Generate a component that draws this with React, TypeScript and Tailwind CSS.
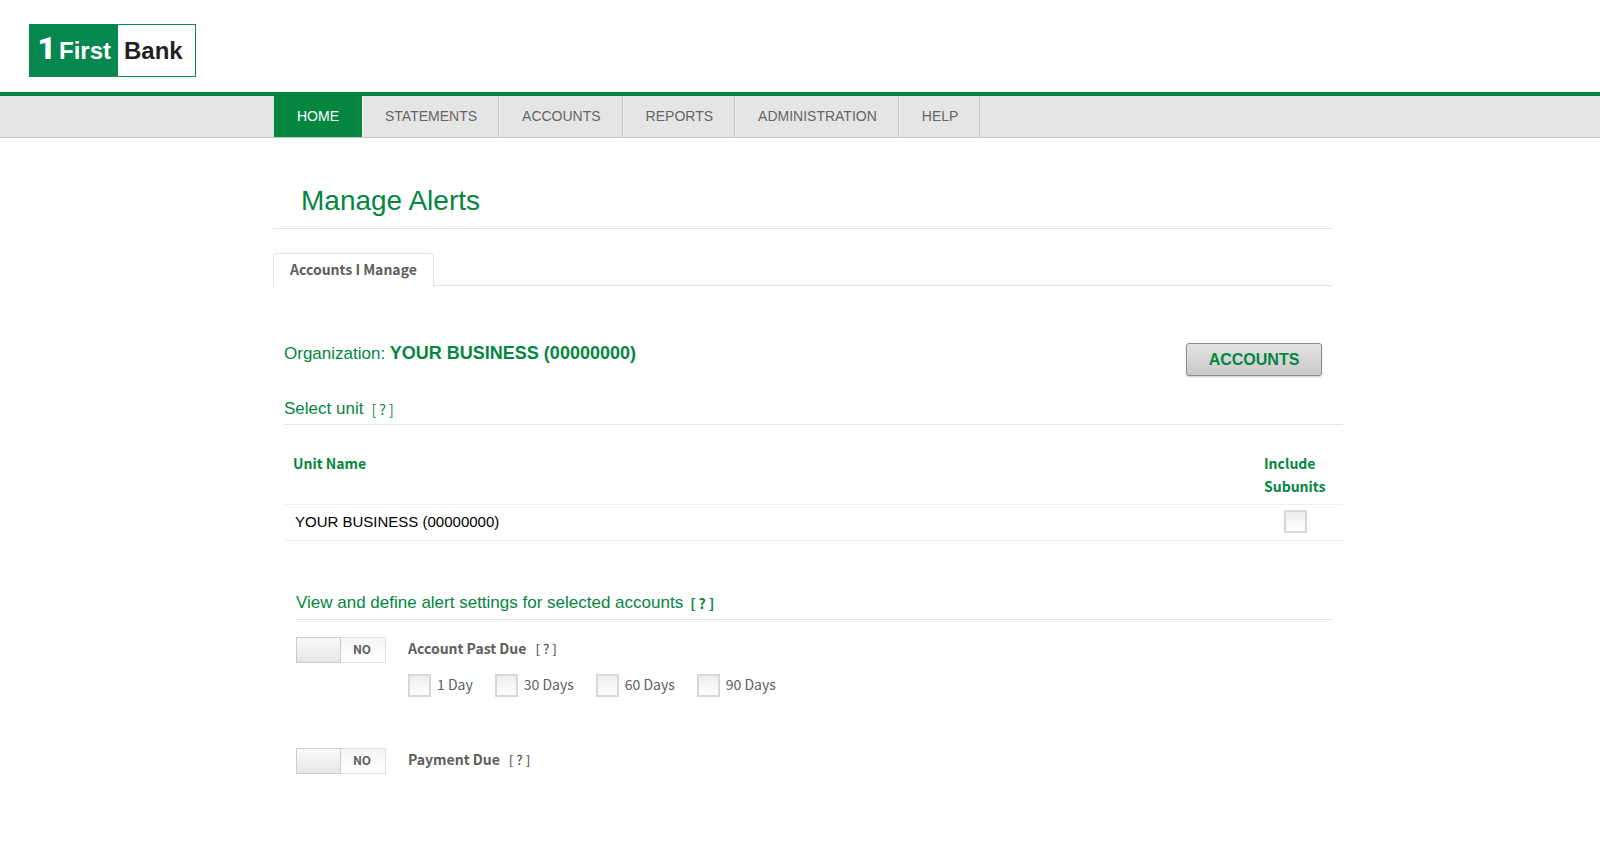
import React, { useState } from "react";

const navItems = ["HOME", "STATEMENTS", "ACCOUNTS", "REPORTS", "ADMINISTRATION", "HELP"];
const pastDueOptions = ["1 Day", "30 Days", "60 Days", "90 Days"];

const helvetica = "font-['Liberation_Sans',Arial,sans-serif]";
const source = "font-['Noto_Sans_CJK_SC',sans-serif]";

function Logo() {
  return (
    <a
      href="#"
      aria-label="1 First Bank"
      className="flex h-[53px] w-[167px] border border-[#0a8a54] bg-white text-[24px] leading-[53px] font-bold"
    >
      <span className="flex w-[88px] items-center justify-end gap-[3px] bg-[#05874f] pr-[7px] text-white">
        <span className="pb-[4px] font-['Roboto',sans-serif] text-[32px] leading-[47px] font-black">1</span>
        <span>First</span>
      </span>
      <span className="flex items-center pl-[6px] text-[#231f20]">Bank</span>
    </a>
  );
}

function Help({ className = "", topic }: { className?: string; topic: string }) {
  return (
    <button type="button" title={`Help: ${topic}`} className={`${source} leading-[20px] ${className}`}>
      [ ? ]
    </button>
  );
}

const boxClass =
  "size-[23px] shrink-0 appearance-none border-2 border-[#d8d8d8] bg-linear-to-b from-[#eeeeee] to-white checked:from-[#04863f] checked:to-[#04863f]";

function Toggle({ label }: { label: string }) {
  const [on, setOn] = useState(false);
  return (
    <button
      type="button"
      role="switch"
      aria-checked={on}
      aria-label={label}
      onClick={() => setOn(!on)}
      className={`${source} flex h-[26px] w-[90px] shrink-0 text-[12px] leading-[22px] font-bold text-[#5e5e5e] ${on ? "flex-row-reverse" : ""}`}
    >
      <span className="h-full w-[45px] border border-[#cbcbcb] bg-linear-to-b from-[#fafafa] to-[#e6e6e6]" />
      <span className="h-full w-[45px] border border-l-0 border-[#e0e0e0] bg-linear-to-b from-[#f5f5f5] to-white pr-[2px]">
        {on ? "YES" : "NO"}
      </span>
    </button>
  );
}

export default function App() {
  return (
    <div className={`${helvetica} min-h-screen bg-white text-[#5e5e5e]`}>
      <header>
        <div className="px-[29px] pt-[24px] pb-[15px]">
          <Logo />
        </div>
        <nav className="border-t-4 border-b border-t-[#04863f] border-b-[#c6c6c6] bg-[#e5e5e5] pl-[18px]">
          <ul className="mx-auto flex h-[41px] max-w-[1070px]">
            {navItems.map((item, i) => (
              <li key={item}>
                <a
                  href="#"
                  aria-current={i === 0 ? "page" : undefined}
                  className={`block text-[14px] leading-[41px] ${
                    i === 0
                      ? "bg-[#04863f] px-[23px] text-white"
                      : "border-r border-l border-l-[#f2f2f2] border-r-[#c6c6c6] pr-[21px] pl-[22px] text-[#666666]"
                  }`}
                >
                  {item}
                </a>
              </li>
            ))}
          </ul>
        </nav>
      </header>

      <main className="pl-[16px]">
        <div className="mx-auto max-w-[1070px]">
          <h1 className="mr-[11px] border-b border-[#e3e3e3] pt-[45px] pb-[9px] pl-[28px] text-[28px] leading-[36px] text-[#04863f]">
            Manage Alerts
          </h1>

          <div role="tablist" className="mt-[24px] mr-[11px] flex">
            <button
              type="button"
              role="tab"
              aria-selected="true"
              className={`${source} h-[33px] rounded-t-[4px] border border-b-0 border-[#e3e3e3] px-[16px] pb-[3px] text-[14px] leading-[28px] font-bold`}
            >
              Accounts I Manage
            </button>
            <div className="flex-1 border-b border-[#e3e3e3]" />
          </div>

          <section className="pt-[57px] pl-[11px] text-[#04863f]">
            <div className="mr-[21px] flex items-start justify-between">
              <p className="text-[17px] leading-[20px]">
                Organization: <strong className="text-[18px]">YOUR BUSINESS (00000000)</strong>
              </p>
              <button
                type="button"
                className="h-[33px] w-[136px] rounded-[3px] border border-[#8c8c8c] bg-linear-to-b from-[#e2e2e2] to-[#cacaca] text-[16px] font-bold shadow-[0_1px_2px_#cccccc]"
              >
                ACCOUNTS
              </button>
            </div>

            <div className="mt-[23px] flex items-center border-b border-[#e3e3e3] pb-[5px]">
              <h2 className="text-[17px] leading-[20px]">Select unit</h2>
              <Help topic="Select unit" className="ml-[8px] text-[14px]" />
            </div>

            <table className="w-full border-collapse text-left">
              <thead className={`${source} text-[14px] leading-[23px]`}>
                <tr className="border-b border-[#efefef] align-top">
                  <th className="pt-[27px] pb-[6px] pl-[9px] font-bold">Unit Name</th>
                  <th className="w-[79px] pt-[27px] pb-[6px] font-bold">
                    Include
                    <br />
                    Subunits
                  </th>
                </tr>
              </thead>
              <tbody>
                <tr className="h-[36px] border-b border-[#efefef] text-[15px] text-black">
                  <td className="pl-[11px]">YOUR BUSINESS (00000000)</td>
                  <td className="pb-[3px] pl-[20px]">
                    <input type="checkbox" aria-label="Include subunits" className={`${boxClass} block`} />
                  </td>
                </tr>
              </tbody>
            </table>
          </section>

          <section className={`${source} mt-[52px] mr-[11px] ml-[23px] text-[14px]`}>
            <div className="flex items-center border-b border-[#e3e3e3] pb-[6px] text-[#04863f]">
              <h2 className={`${helvetica} text-[17px] leading-[20px]`}>
                View and define alert settings for selected accounts
              </h2>
              <Help topic="Alert settings" className="ml-[7px] text-[14px] font-bold" />
            </div>

            <div className="mt-[17px] flex gap-[22px]">
              <Toggle label="Account Past Due" />
              <div>
                <div className="flex h-[26px] items-center pb-[3px]">
                  <h3 className="leading-[23px] font-bold">Account Past Due</h3>
                  <Help topic="Account Past Due" className="ml-[9px] text-[13px] font-medium" />
                </div>
                <div className="mt-[11px] flex flex-wrap gap-[22px]">
                  {pastDueOptions.map((option) => (
                    <label key={option} className="flex h-[23px] items-center gap-[6px]">
                      <input type="checkbox" className={boxClass} />
                      <span className="pb-[2px] leading-[21px]">{option}</span>
                    </label>
                  ))}
                </div>
              </div>
            </div>

            <div className="mt-[51px] flex gap-[22px] pb-[24px]">
              <Toggle label="Payment Due" />
              <div className="flex h-[26px] items-center pb-[3px]">
                <h3 className="leading-[23px] font-bold">Payment Due</h3>
                <Help topic="Payment Due" className="ml-[9px] text-[13px] font-medium" />
              </div>
            </div>
          </section>
        </div>
      </main>
    </div>
  );
}
